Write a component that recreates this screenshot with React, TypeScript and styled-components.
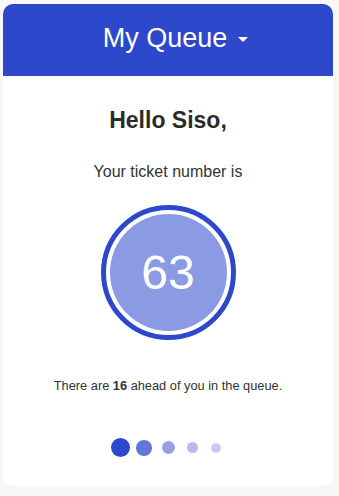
import styled, { createGlobalStyle } from "styled-components";

const GlobalStyle = createGlobalStyle`
  html, body {
    margin: 0;
    padding: 0;
    background: #f7f7f7;
    font-family: "Liberation Sans", Arial, sans-serif;
  }
`;

const BLUE = "#2e48cc";

const Page = styled.div`
  padding: 4px 6px 10px 3px;
`;

const Card = styled.div`
  height: 482px;
  background: #ffffff;
  border-radius: 10px;
  overflow: hidden;
  display: flex;
  flex-direction: column;
  align-items: center;
`;

const Header = styled.div`
  align-self: stretch;
  height: 72px;
  background: ${BLUE};
  display: flex;
  align-items: center;
  justify-content: center;
  padding: 0 0 3.4px 15px;
  box-sizing: border-box;
  cursor: pointer;
`;

const Title = styled.span`
  color: #ffffff;
  font-size: 27px;
  line-height: 31px;
`;

const Caret = styled.span`
  width: 0;
  height: 0;
  margin: 3px 0 0 11px;
  border-top: 5.5px solid #ffffff;
  border-left: 5.5px solid transparent;
  border-right: 5.5px solid transparent;
`;

const Greeting = styled.h1`
  margin: 30px 0 0;
  font-size: 23px;
  line-height: 28px;
  font-weight: 700;
  color: #2b2b2b;
`;

const Lead = styled.p`
  margin: 28px 0 0;
  font-size: 16px;
  line-height: 20px;
  color: #333333;
`;

const Ticket = styled.div`
  margin-top: 23px;
  width: 135px;
  height: 135px;
  box-sizing: border-box;
  border: 5px solid ${BLUE};
  border-radius: 50%;
  padding: 4px;
`;

const TicketFill = styled.div`
  width: 100%;
  height: 100%;
  border-radius: 50%;
  background: #8a9be3;
  display: flex;
  align-items: center;
  justify-content: center;
  color: #ffffff;
  font-size: 48px;
`;

const Ahead = styled.p`
  margin: 38px 0 0;
  font-size: 12.8px;
  line-height: 16px;
  color: #333333;

  b {
    font-weight: 700;
  }
`;

const Dots = styled.div`
  margin-top: 44px;
  height: 19px;
  display: flex;
  align-items: center;
`;

const Dot = styled.span<{ $size: number; $alpha: number }>`
  width: ${(p) => p.$size}px;
  height: ${(p) => p.$size}px;
  margin: 0 ${(p) => (24 - p.$size) / 2}px;
  border-radius: 50%;
  background: rgba(46, 72, 204, ${(p) => p.$alpha});
`;

const dots = [
  { size: 19, alpha: 1 },
  { size: 16, alpha: 0.75 },
  { size: 13, alpha: 0.52 },
  { size: 11, alpha: 0.37 },
  { size: 10, alpha: 0.28 },
];

export default function App() {
  return (
    <>
      <GlobalStyle />
      <Page>
        <Card>
          <Header>
            <Title>My Queue</Title>
            <Caret />
          </Header>
          <Greeting>Hello Siso,</Greeting>
          <Lead>Your ticket number is</Lead>
          <Ticket>
            <TicketFill>63</TicketFill>
          </Ticket>
          <Ahead>
            There are <b>16</b> ahead of you in the queue.
          </Ahead>
          <Dots>
            {dots.map((d, i) => (
              <Dot key={i} $size={d.size} $alpha={d.alpha} />
            ))}
          </Dots>
        </Card>
      </Page>
    </>
  );
}
